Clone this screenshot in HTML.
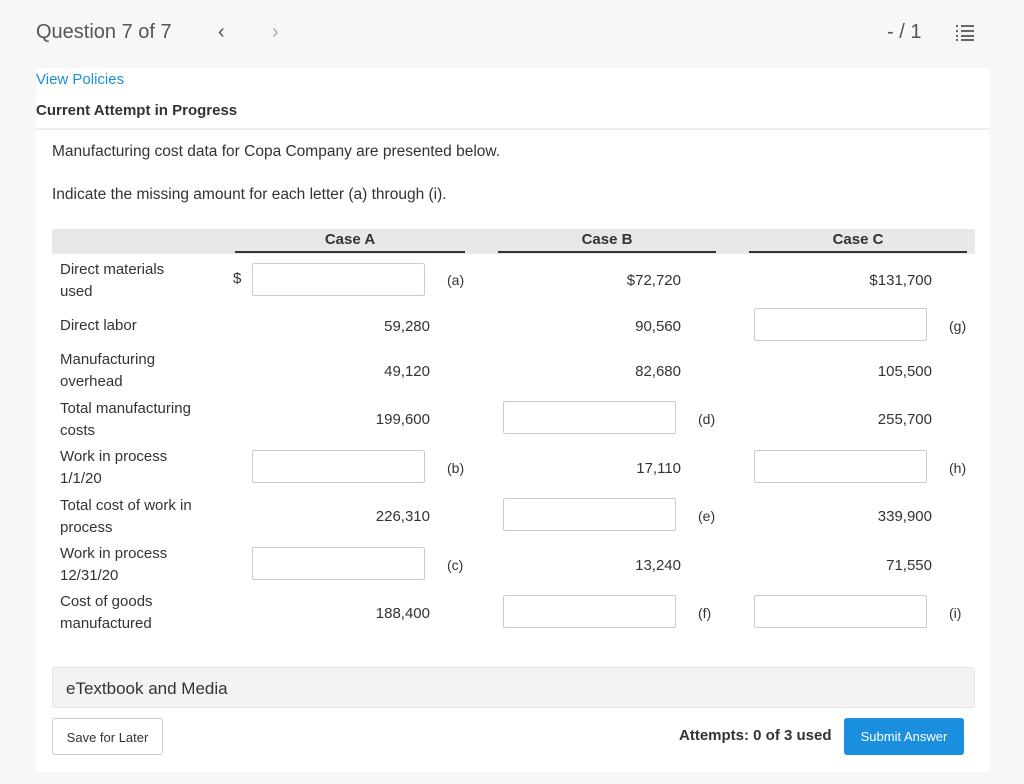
<!DOCTYPE html>
<html><head><style>
*{margin:0;padding:0;box-sizing:border-box}
body{width:1024px;height:784px;background:#f7f7f7;font-family:"Liberation Sans",sans-serif;color:#333;position:relative;overflow:hidden}
.a{position:absolute;white-space:nowrap}
.box{position:absolute;background:#fff}
.in{position:absolute;width:173px;height:33px;border:1px solid #ccc;background:#fff;border-radius:2px}
.lb{position:absolute;left:60px;font-size:15px;line-height:22px;color:#333;margin-top:1px}
.n{position:absolute;font-size:15px;text-align:right;width:120px;margin-top:2px}
.l{position:absolute;font-size:14px;margin-top:1px}
.hd{position:absolute;top:231px;font-size:15px;font-weight:bold;text-align:center;border-bottom:2px solid #333;height:22px}
</style></head><body>
<div class="a" style="left:36px;top:21px;font-size:20px;color:#555">Question 7 of 7</div>
<div class="a" style="left:218px;top:21px;font-size:20px;color:#555">‹</div>
<div class="a" style="left:272px;top:21px;font-size:20px;color:#aaa">›</div>
<div class="a" style="left:887px;top:21px;font-size:20px;color:#555">- / 1</div>
<svg class="a" style="left:955px;top:24px" width="20" height="18"><g fill="#666"><rect x="6" y="1" width="13" height="2"/><rect x="6" y="6" width="13" height="2"/><rect x="6" y="11" width="13" height="2"/><rect x="6" y="15" width="13" height="2"/><rect x="1" y="1" width="2" height="2"/><rect x="1" y="6" width="2" height="2"/><rect x="1" y="11" width="2" height="2"/><rect x="1" y="15" width="2" height="2"/></g></svg>
<div class="box" style="left:36px;top:68px;width:954px;height:704px"></div>
<div class="a" style="left:36px;top:71px;font-size:15px;color:#1a8fd6">View Policies</div>
<div class="a" style="left:36px;top:102px;font-size:15px;font-weight:bold;color:#333">Current Attempt in Progress</div>
<div class="a" style="left:36px;top:128px;width:954px;height:2px;background:#eee"></div>
<div class="a" style="left:52px;top:143px;font-size:15.5px">Manufacturing cost data for Copa Company are presented below.</div>
<div class="a" style="left:52px;top:186px;font-size:15.5px">Indicate the missing amount for each letter (a) through (i).</div>
<div class="a" style="left:52px;top:229px;width:923px;height:25px;background:#e8e8e8"></div>
<div class="hd" style="left:235px;width:230px">Case A</div>
<div class="hd" style="left:498px;width:218px">Case B</div>
<div class="hd" style="left:749px;width:218px">Case C</div>

<div class="lb" style="top:258px">Direct materials<br>used</div>
<div class="lb" style="top:314px">Direct labor</div>
<div class="lb" style="top:348px">Manufacturing<br>overhead</div>
<div class="lb" style="top:397px">Total manufacturing<br>costs</div>
<div class="lb" style="top:445px">Work in process<br>1/1/20</div>
<div class="lb" style="top:494px">Total cost of work in<br>process</div>
<div class="lb" style="top:542px">Work in process<br>12/31/20</div>
<div class="lb" style="top:590px">Cost of goods<br>manufactured</div>

<div class="a" style="left:233px;top:270px;font-size:15px">$</div>
<div class="in" style="left:252px;top:263px"></div><div class="l" style="left:447px;top:271px">(a)</div>
<div class="n" style="left:561px;top:270px">$72,720</div>
<div class="n" style="left:812px;top:270px">$131,700</div>

<div class="n" style="left:310px;top:316px">59,280</div>
<div class="n" style="left:561px;top:316px">90,560</div>
<div class="in" style="left:754px;top:308px"></div><div class="l" style="left:949px;top:317px">(g)</div>

<div class="n" style="left:310px;top:361px">49,120</div>
<div class="n" style="left:561px;top:361px">82,680</div>
<div class="n" style="left:812px;top:361px">105,500</div>

<div class="n" style="left:310px;top:409px">199,600</div>
<div class="in" style="left:503px;top:401px"></div><div class="l" style="left:698px;top:410px">(d)</div>
<div class="n" style="left:812px;top:409px">255,700</div>

<div class="in" style="left:252px;top:450px"></div><div class="l" style="left:447px;top:459px">(b)</div>
<div class="n" style="left:561px;top:458px">17,110</div>
<div class="in" style="left:754px;top:450px"></div><div class="l" style="left:949px;top:459px">(h)</div>

<div class="n" style="left:310px;top:506px">226,310</div>
<div class="in" style="left:503px;top:498px"></div><div class="l" style="left:698px;top:507px">(e)</div>
<div class="n" style="left:812px;top:506px">339,900</div>

<div class="in" style="left:252px;top:547px"></div><div class="l" style="left:447px;top:556px">(c)</div>
<div class="n" style="left:561px;top:555px">13,240</div>
<div class="n" style="left:812px;top:555px">71,550</div>

<div class="n" style="left:310px;top:603px">188,400</div>
<div class="in" style="left:503px;top:595px"></div><div class="l" style="left:698px;top:604px">(f)</div>
<div class="in" style="left:754px;top:595px"></div><div class="l" style="left:949px;top:604px">(i)</div>

<div class="a" style="left:52px;top:667px;width:923px;height:41px;background:#f3f3f3;border:1px solid #e4e4e4;border-radius:3px"></div>
<div class="a" style="left:66px;top:679px;font-size:17px;color:#333">eTextbook and Media</div>
<div class="a" style="left:52px;top:718px;width:111px;height:37px;border:1px solid #ccc;border-radius:3px;background:#fff;font-size:13px;text-align:center;line-height:37px">Save for Later</div>
<div class="a" style="left:679px;top:727px;font-size:15px;font-weight:bold">Attempts: 0 of 3 used</div>
<div class="a" style="left:844px;top:718px;width:120px;height:37px;background:#1a8fde;border-radius:3px;color:#fff;font-size:13px;text-align:center;line-height:38px">Submit Answer</div>
</body></html>
